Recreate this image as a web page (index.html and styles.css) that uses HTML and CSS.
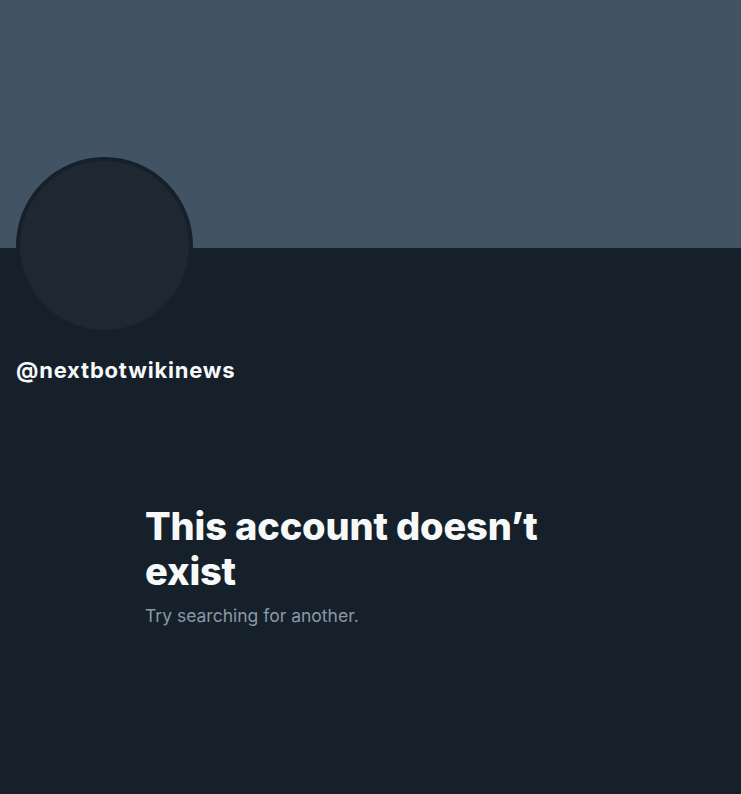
FILE: index.html
```html
<!DOCTYPE html>
<html>
<head>
<meta charset="utf-8">
<link rel="stylesheet" href="styles.css">
</head>
<body>
<div class="page">
  <div class="banner"></div>
  <div class="profile">
    <div class="avatar"></div>
    <div class="handle">@nextbotwikinews</div>
  </div>
  <div class="empty">
    <h1 class="empty-title">This account doesn’t exist</h1>
    <p class="empty-sub">Try searching for another.</p>
  </div>
</div>
</body>
</html>
```
FILE: styles.css
```css
html, body {
  margin: 0;
  padding: 0;
  background: #15202b;
}
.page {
  width: 741px;
  min-height: 794px;
  background: #15202b;
  font-family: Inter, "Liberation Sans", sans-serif;
  color: #f7f9f9;
}
.banner {
  height: 248px;
  background: #425364;
}
.profile {
  padding: 0 16px;
}
.avatar {
  width: 169px;
  height: 169px;
  border-radius: 50%;
  background: #1e2732;
  border: 4px solid #15202b;
  margin-top: -91px;
}
.handle {
  margin-top: 22px;
  font-size: 22px;
  font-weight: 700;
  line-height: 28px;
  letter-spacing: 0.8px;
}
.empty {
  margin: 120px 0 0 145px;
  max-width: 420px;
}
.empty-title {
  margin: 0;
  font-size: 38px;
  font-weight: 800;
  line-height: 45px;
  letter-spacing: -0.15px;
}
.empty-sub {
  margin: 10px 0 0;
  font-size: 17.5px;
  line-height: 24px;
  color: #8b98a5;
}
```
